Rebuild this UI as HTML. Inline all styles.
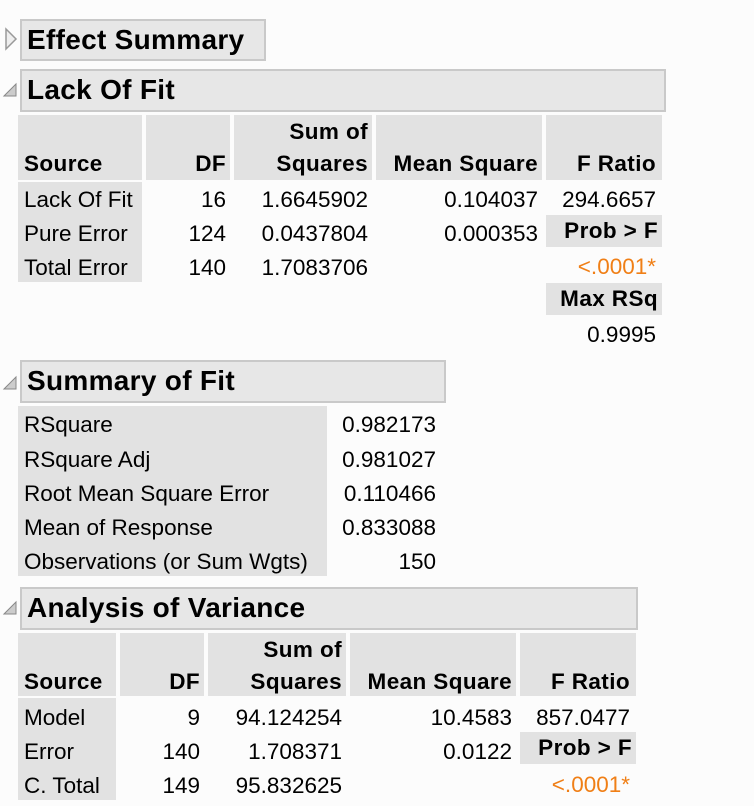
<!DOCTYPE html>
<html><head><meta charset="utf-8"><style>
html,body{margin:0;padding:0;width:754px;height:806px;background:#fcfcfc;overflow:hidden;font-family:"Liberation Sans",Arial,sans-serif;color:#000}
div{position:absolute;box-sizing:border-box;white-space:nowrap}
.hb{background:#e7e7e7;border:2px solid #c9c9c9;font-weight:bold;font-size:28px;padding-left:5px;line-height:37px;letter-spacing:0.3px}
.g{background:#e2e2e2}
.t{font-size:22.5px;line-height:34px}
.r{text-align:right}
.b{font-weight:bold;font-size:22.5px;letter-spacing:0.4px}
.o{color:#f07f16}
</style></head><body>
<svg style="position:absolute;left:0;top:0" width="24" height="806">
<polygon points="6,29 16,39 6,49" fill="#eee" stroke="#999" stroke-width="1.5"/>
<polygon points="4,96 16,84 16,96" fill="#ccc" stroke="#888" stroke-width="1"/>
<polygon points="4,389 16,377 16,389" fill="#ccc" stroke="#888" stroke-width="1"/>
<polygon points="4,614 16,602 16,614" fill="#ccc" stroke="#888" stroke-width="1"/>
</svg>
<div class="hb" style="left:20px;top:19px;width:246px;height:42px">Effect Summary</div>
<div class="hb" style="left:20px;top:69px;width:646px;height:43px">Lack Of Fit</div>

<div class="g" style="left:18px;top:115px;width:124px;height:65px"></div>
<div class="g" style="left:146px;top:115px;width:84px;height:65px"></div>
<div class="g" style="left:234px;top:115px;width:138px;height:65px"></div>
<div class="g" style="left:376px;top:115px;width:166px;height:65px"></div>
<div class="g" style="left:546px;top:115px;width:116px;height:65px"></div>
<div class="t b" style="left:24px;top:147px">Source</div>
<div class="t b r" style="left:146px;top:147px;width:80px">DF</div>
<div class="t b r" style="left:234px;top:115px;width:134px">Sum of</div>
<div class="t b r" style="left:234px;top:147px;width:134px">Squares</div>
<div class="t b r" style="left:376px;top:147px;width:162px">Mean Square</div>
<div class="t b r" style="left:546px;top:147px;width:110px">F Ratio</div>
<div class="g" style="left:18px;top:182px;width:124px;height:100px"></div>
<div class="t" style="left:24px;top:183px">Lack Of Fit</div>
<div class="t" style="left:24px;top:217px">Pure Error</div>
<div class="t" style="left:24px;top:251px">Total Error</div>
<div class="t r" style="left:146px;top:183px;width:80px">16</div>
<div class="t r" style="left:146px;top:217px;width:80px">124</div>
<div class="t r" style="left:146px;top:251px;width:80px">140</div>
<div class="t r" style="left:234px;top:183px;width:134px">1.6645902</div>
<div class="t r" style="left:234px;top:217px;width:134px">0.0437804</div>
<div class="t r" style="left:234px;top:251px;width:134px">1.7083706</div>
<div class="t r" style="left:376px;top:183px;width:162px">0.104037</div>
<div class="t r" style="left:376px;top:217px;width:162px">0.000353</div>
<div class="t r" style="left:546px;top:183px;width:110px">294.6657</div>
<div class="g" style="left:546px;top:215px;width:116px;height:32px"></div>
<div class="t b r" style="left:546px;top:214px;width:112px">Prob &gt; F</div>
<div class="t r o" style="left:546px;top:250px;width:110px">&lt;.0001*</div>
<div class="g" style="left:546px;top:283px;width:116px;height:32px"></div>
<div class="t b r" style="left:546px;top:282px;width:112px">Max RSq</div>
<div class="t r" style="left:546px;top:318px;width:110px">0.9995</div>

<div class="hb" style="left:20px;top:360px;width:426px;height:43px">Summary of Fit</div>
<div class="g" style="left:18px;top:406px;width:309px;height:170px"></div>
<div class="t" style="left:24px;top:408px">RSquare</div>
<div class="t" style="left:24px;top:443px">RSquare Adj</div>
<div class="t" style="left:24px;top:477px">Root Mean Square Error</div>
<div class="t" style="left:24px;top:511px">Mean of Response</div>
<div class="t" style="left:24px;top:545px">Observations (or Sum Wgts)</div>
<div class="t r" style="left:330px;top:408px;width:106px">0.982173</div>
<div class="t r" style="left:330px;top:443px;width:106px">0.981027</div>
<div class="t r" style="left:330px;top:477px;width:106px">0.110466</div>
<div class="t r" style="left:330px;top:511px;width:106px">0.833088</div>
<div class="t r" style="left:330px;top:545px;width:106px">150</div>

<div class="hb" style="left:20px;top:587px;width:618px;height:43px">Analysis of Variance</div>
<div class="g" style="left:18px;top:633px;width:98px;height:63px"></div>
<div class="g" style="left:120px;top:633px;width:84px;height:63px"></div>
<div class="g" style="left:208px;top:633px;width:138px;height:63px"></div>
<div class="g" style="left:350px;top:633px;width:166px;height:63px"></div>
<div class="g" style="left:520px;top:633px;width:116px;height:63px"></div>
<div class="t b" style="left:24px;top:665px">Source</div>
<div class="t b r" style="left:120px;top:665px;width:80px">DF</div>
<div class="t b r" style="left:208px;top:633px;width:134px">Sum of</div>
<div class="t b r" style="left:208px;top:665px;width:134px">Squares</div>
<div class="t b r" style="left:350px;top:665px;width:162px">Mean Square</div>
<div class="t b r" style="left:520px;top:665px;width:110px">F Ratio</div>
<div class="g" style="left:18px;top:698px;width:98px;height:102px"></div>
<div class="t" style="left:24px;top:701px">Model</div>
<div class="t" style="left:24px;top:735px">Error</div>
<div class="t" style="left:24px;top:769px">C. Total</div>
<div class="t r" style="left:120px;top:701px;width:80px">9</div>
<div class="t r" style="left:120px;top:735px;width:80px">140</div>
<div class="t r" style="left:120px;top:769px;width:80px">149</div>
<div class="t r" style="left:208px;top:701px;width:134px">94.124254</div>
<div class="t r" style="left:208px;top:735px;width:134px">1.708371</div>
<div class="t r" style="left:208px;top:769px;width:134px">95.832625</div>
<div class="t r" style="left:350px;top:701px;width:162px">10.4583</div>
<div class="t r" style="left:350px;top:735px;width:162px">0.0122</div>
<div class="t r" style="left:520px;top:701px;width:110px">857.0477</div>
<div class="g" style="left:520px;top:732px;width:116px;height:32px"></div>
<div class="t b r" style="left:520px;top:731px;width:112px">Prob &gt; F</div>
<div class="t r o" style="left:520px;top:768px;width:110px">&lt;.0001*</div>
</body></html>
